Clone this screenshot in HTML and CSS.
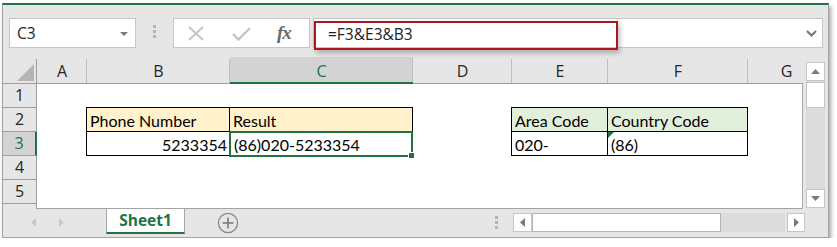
FILE: index.html
```html
<!DOCTYPE html>
<html>
<head>
<meta charset="utf-8">
<link rel="stylesheet" href="styles.css">
</head>
<body>
<div class="window">
  <div class="fbar">
    <div class="namebox">
      <span class="nb-text">C3</span>
      <svg class="caret" width="8" height="4" viewBox="0 0 8 4"><polygon points="0,0 8,0 4,4" fill="#7a7a7a"/></svg>
    </div>
    <div class="grip"><i></i><i></i><i></i></div>
    <div class="fxbox">
      <svg class="ico-x" width="16" height="15" viewBox="0 0 16 15"><path d="M1 1 L15 14 M15 1 L1 14" stroke="#c4c4c4" stroke-width="2" fill="none"/></svg>
      <svg class="ico-ok" width="19" height="14" viewBox="0 0 19 14"><path d="M1 7 L6.5 12.5 L18 1" stroke="#c4c4c4" stroke-width="2.4" fill="none"/></svg>
      <span class="fx">fx</span>
    </div>
    <div class="formula">
      <span class="ftext">=F3&amp;E3&amp;B3</span>
      <svg class="chev" width="11" height="7" viewBox="0 0 11 7"><path d="M1 1 L5.5 5.5 L10 1" stroke="#7a7a7a" stroke-width="2.2" fill="none"/></svg>
      <div class="annot"></div>
    </div>
  </div>

  <div class="sheet">
    <div class="grid">
      <div class="ch corner"><svg width="17" height="17" viewBox="0 0 17 17"><polygon points="0,17 17,17 17,0" fill="#b5b5b5"/></svg></div>
      <div class="ch">A</div>
      <div class="ch">B</div>
      <div class="ch sel">C</div>
      <div class="ch">D</div>
      <div class="ch">E</div>
      <div class="ch">F</div>
      <div class="ch g">G</div>

      <div class="rh">1</div>
      <div class="c"></div><div class="c"></div><div class="c"></div><div class="c"></div><div class="c"></div><div class="c"></div><div class="c gl"></div>

      <div class="rh">2</div>
      <div class="c"></div>
      <div class="c tb yel">Phone Number</div>
      <div class="c tb yel">Result</div>
      <div class="c"></div>
      <div class="c tb grn">Area Code</div>
      <div class="c tb grn">Country Code</div>
      <div class="c gl"></div>

      <div class="rh sel">3</div>
      <div class="c"></div>
      <div class="c tb right">5233354</div>
      <div class="c tb active">(86)020-5233354<span class="selbox"><span class="handle"></span></span></div>
      <div class="c"></div>
      <div class="c tb">020-</div>
      <div class="c tb flag">(86)<span class="tri"></span></div>
      <div class="c gl"></div>

      <div class="rh">4</div>
      <div class="c"></div><div class="c"></div><div class="c"></div><div class="c"></div><div class="c"></div><div class="c"></div><div class="c gl"></div>

      <div class="rh">5</div>
      <div class="c"></div><div class="c"></div><div class="c"></div><div class="c"></div><div class="c"></div><div class="c"></div><div class="c gl"></div>

      <div class="rh last"></div>
      <div class="c last"></div><div class="c last"></div><div class="c last"></div><div class="c last"></div><div class="c last"></div><div class="c last"></div><div class="c gl last"></div>
    </div>
    <div class="vscroll">
      <div class="vtrack">
        <div class="sbtn"><svg width="9" height="5" viewBox="0 0 9 5"><polygon points="0,5 9,5 4.5,0" fill="#7a7a7a"/></svg></div>
        <div class="vthumb"></div>
        <div class="vspace"></div>
        <div class="sbtn"><svg width="9" height="5" viewBox="0 0 9 5"><polygon points="0,0 9,0 4.5,5" fill="#7a7a7a"/></svg></div>
      </div>
    </div>
  </div>

  <div class="tabbar">
    <div class="nav">
      <svg width="103" height="28" viewBox="0 0 103 28"><polygon points="33,5 28,9.5 33,14" fill="#c8c8c8"/><polygon points="56,5 61,9.5 56,14" fill="#c8c8c8"/></svg>
    </div>
    <div class="tab">Sheet1</div>
    <svg class="plus" width="22" height="22" viewBox="0 0 22 22"><circle cx="11" cy="11" r="9.6" stroke="#8a8a8a" stroke-width="1.3" fill="none"/><path d="M11 5.5 V16.5 M5.5 11 H16.5" stroke="#7a7a7a" stroke-width="1.6"/></svg>
    <div class="hgrip"><i></i><i></i><i></i></div>
    <div class="hscroll">
      <div class="sbtn h"><svg width="5" height="9" viewBox="0 0 5 9"><polygon points="5,0 5,9 0,4.5" fill="#7a7a7a"/></svg></div>
      <div class="hthumb"></div>
      <div class="htrack"></div>
      <div class="sbtn h r"><svg width="5" height="9" viewBox="0 0 5 9"><polygon points="0,0 0,9 5,4.5" fill="#7a7a7a"/></svg></div>
    </div>
  </div>
</div>
</body>
</html>
```

FILE: styles.css
```css
* { box-sizing: border-box; }
html, body { margin: 0; padding: 0; background: #fff; }
body { font-family: "Open Sans", "Noto Sans", sans-serif; color: #222; }

.window {
  margin: 3px 0 0 2px;
  width: 827px;
  height: 235px;
  background: #e6e6e6;
  border: 1px solid #a3a3a3;
  border-top: 2px solid #217346;
  box-shadow: 2px 3px 4px rgba(0,0,0,0.35);
  display: flex;
  flex-direction: column;
}

/* formula bar */
.fbar {
  height: 52px;
  padding-top: 13px;
  display: flex;
  align-items: flex-start;
}
.namebox {
  margin-left: 6px;
  width: 127px;
  height: 30px;
  background: #fff;
  border: 1px solid #c6c6c6;
  display: flex;
  align-items: center;
  padding-left: 7px;
  font-size: 15.5px;
  color: #222;
}
.caret { margin-left: auto; margin-right: 7px; margin-top: 1px; }
.grip {
  width: 37px;
  height: 30px;
  display: flex;
  flex-direction: column;
  align-items: center;
  padding-top: 7px;
  gap: 2px;
}
.grip i, .hgrip i { display: block; width: 3px; height: 3px; background: #b4b4b4; }
.fxbox {
  width: 137px;
  height: 30px;
  background: #fff;
  border: 1px solid #c6c6c6;
  display: flex;
  align-items: center;
  padding-left: 14px;
}
.ico-x { margin-top: 1px; }
.ico-ok { margin-left: 28px; margin-top: 1px; }
.fx {
  margin-left: 26px;
  font-family: "Liberation Serif", "DejaVu Serif", serif;
  font-style: italic;
  font-weight: 700;
  font-size: 19px;
  color: #6a6a6a;
  letter-spacing: -1px;
}
.formula {
  position: relative;
  margin-left: 3px;
  width: 510px;
  height: 30px;
  background: #fff;
  border: 1px solid #c6c6c6;
  display: flex;
  align-items: center;
  padding-left: 14px;
  font-size: 15.5px;
  color: #222;
}
.ftext { margin-top: 1px; }
.chev { margin-left: auto; margin-right: 5px; margin-top: 1px; }
.annot {
  position: absolute;
  left: 0;
  top: 2px;
  width: 304px;
  height: 29px;
  border: 2px solid #a9181c;
  box-shadow: 2px 3px 5px rgba(0,0,0,0.25);
}

/* sheet */
.sheet { height: 152px; display: flex; }
.grid {
  width: 800px;
  display: grid;
  grid-template-columns: 34px 50px 143px 183px 99px 96px 140px 55px;
  grid-template-rows: 27px repeat(5, 24px) 5px;
  background: #fff;
  border-bottom: 1px solid #a3a3a3;
}
.ch {
  background: #e6e6e6 linear-gradient(#bfbfbf, #bfbfbf) right bottom / 1px 24px no-repeat;
  border-bottom: 1px solid #9e9e9e;
  text-align: center;
  font-size: 16px;
  line-height: 26px;
  padding-top: 1px;
  color: #262626;
}
.ch.sel {
  background-color: #d3d3d3;
  border-bottom: 2px solid #217346;
  color: #217346;
}
.ch.g { background-image: none; padding-left: 22px; }
.corner {
  background-image: linear-gradient(#9e9e9e, #9e9e9e);
  display: flex;
  align-items: flex-end;
  justify-content: flex-end;
  padding: 0 3px 2px 0;
}
.rh {
  background: #e6e6e6;
  border-right: 1px solid #9e9e9e;
  border-bottom: 1px solid #9e9e9e;
  text-align: center;
  font-size: 16px;
  line-height: 23px;
  color: #262626;
}
.rh.sel {
  background: #d3d3d3;
  border-right: 2px solid #217346;
  color: #217346;
}
.rh.last { border-bottom: none; }
.c {
  font-family: "Lato", "Liberation Sans", sans-serif;
  font-size: 16px;
  line-height: 23px;
  padding: 1px 3px 0 3px;
  color: #000;
  white-space: nowrap;
  overflow: visible;
}
.gl { border-right: 1px solid #ababab; }
.tb {
  margin: -1px 0 0 -1px;
  border: 1px solid #000;
  position: relative;
}
.yel { background: #fff2cc; }
.grn { background: #e2efda; }
.right { text-align: right; padding-right: 2px; }
.active { padding-left: 4px; }
.selbox {
  position: absolute;
  left: -1px;
  top: -1px;
  right: -1px;
  bottom: -2px;
  border: 2px solid #217346;
}
.handle {
  position: absolute;
  right: -4px;
  bottom: -4px;
  width: 7px;
  height: 7px;
  background: #217346;
  border: 1px solid #fff;
}
.tri {
  position: absolute;
  left: 0;
  top: 0;
  width: 0;
  height: 0;
  border-top: 6px solid #217346;
  border-right: 6px solid transparent;
}

.vscroll { width: 25px; padding: 5px 0 0 3px; }
.vtrack {
  width: 19px;
  height: 146px;
  background: #dcdcdc;
  display: flex;
  flex-direction: column;
}
.sbtn {
  width: 19px;
  height: 19px;
  background: #fff;
  border: 1px solid #c6c6c6;
  display: flex;
  align-items: center;
  justify-content: center;
  flex: none;
}
.vthumb {
  margin-top: 1px;
  height: 26px;
  background: #fff;
  border: 1px solid #c6c6c6;
  flex: none;
}
.vspace { flex: 1; }

/* tab bar */
.tabbar { height: 28px; display: flex; align-items: flex-start; }
.nav { width: 103px; height: 28px; }
.nav svg { display: block; margin-top: 4px; }
.tab {
  width: 79px;
  height: 25px;
  background: #fff;
  border-left: 1px solid #a8a8a8;
  border-right: 1px solid #a8a8a8;
  border-bottom: 2px solid #217346;
  text-align: center;
  font-weight: 700;
  font-size: 15.5px;
  line-height: 22px;
  color: #217346;
}
.plus { margin: 3px 0 0 32px; }
.hgrip {
  margin: 7px 0 0 256px;
  display: flex;
  flex-direction: column;
  gap: 2px;
}
.hscroll {
  margin: 4px 0 0 15px;
  width: 292px;
  height: 19px;
  display: flex;
}
.hthumb {
  width: 189px;
  background: #fff;
  border: 1px solid #b5b5b5;
}
.htrack { width: 64px; background: #dcdcdc; }
.sbtn.r { margin-left: 2px; width: 18px; }
```
